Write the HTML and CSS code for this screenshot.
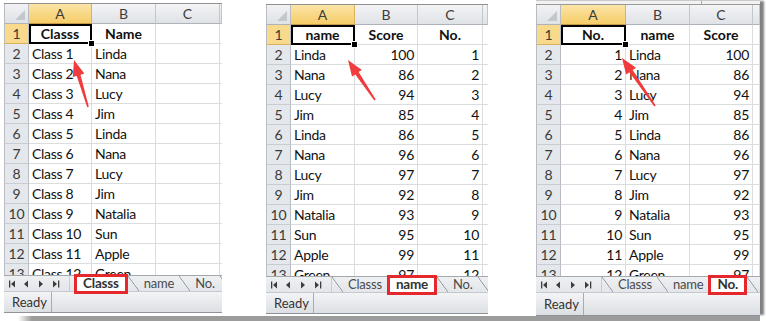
FILE: index.html
```html
<!DOCTYPE html>
<html>
<head>
<meta charset="utf-8">
<title>Sheets</title>
<link rel="stylesheet" href="styles.css">
</head>
<body>
<div class="page">
  <div class="row">
    <section class="panel p1">
      <div class="topline"></div>
      <div class="sheet">
        <div class="corner"><i></i></div><div class="ch sel">A</div><div class="ch">B</div><div class="ch">C</div><div class="ch"></div>
        <div class="rh sel">1</div><div class="c b act">Classs</div><div class="c b">Name</div><div class="c"></div><div class="c"></div>
        <div class="rh">2</div><div class="c">Class 1</div><div class="c">Linda</div><div class="c"></div><div class="c"></div>
        <div class="rh">3</div><div class="c">Class 2</div><div class="c">Nana</div><div class="c"></div><div class="c"></div>
        <div class="rh">4</div><div class="c">Class 3</div><div class="c">Lucy</div><div class="c"></div><div class="c"></div>
        <div class="rh">5</div><div class="c">Class 4</div><div class="c">Jim</div><div class="c"></div><div class="c"></div>
        <div class="rh">6</div><div class="c">Class 5</div><div class="c">Linda</div><div class="c"></div><div class="c"></div>
        <div class="rh">7</div><div class="c">Class 6</div><div class="c">Nana</div><div class="c"></div><div class="c"></div>
        <div class="rh">8</div><div class="c">Class 7</div><div class="c">Lucy</div><div class="c"></div><div class="c"></div>
        <div class="rh">9</div><div class="c">Class 8</div><div class="c">Jim</div><div class="c"></div><div class="c"></div>
        <div class="rh">10</div><div class="c">Class 9</div><div class="c">Natalia</div><div class="c"></div><div class="c"></div>
        <div class="rh">11</div><div class="c">Class 10</div><div class="c">Sun</div><div class="c"></div><div class="c"></div>
        <div class="rh">12</div><div class="c">Class 11</div><div class="c">Apple</div><div class="c"></div><div class="c"></div>
        <div class="rh">13</div><div class="c">Class 12</div><div class="c">Green</div><div class="c"></div><div class="c"></div>
      </div>
      <div class="tabbar">
        <div class="nav"><svg width="60" height="8" viewBox="0 0 60 8"><path d="M5 .5h1.3v7H5zM11 .5v7L7 4zM24 .5v7L20 4zM35 .5v7L39 4zM49 .5v7L53 4zM54 .5h1.3v7H54z" fill="#3d3d3d"/></svg></div>
        <div class="tab on first">Classs</div>
        <div class="tab"><span class="sl"></span><span class="tx">name</span></div>
        <div class="tab"><span class="sl"></span><span class="tx">No.</span></div>
        <div class="tab"><span class="sl"></span></div>
      </div>
      <div class="status"><span class="ready">Ready</span></div>
    </section>

    <section class="panel p2">
      <div class="topline"></div>
      <div class="sheet">
        <div class="corner"><i></i></div><div class="ch sel">A</div><div class="ch">B</div><div class="ch">C</div><div class="ch"></div>
        <div class="rh sel">1</div><div class="c b act">name</div><div class="c b">Score</div><div class="c b">No.</div><div class="c"></div>
        <div class="rh">2</div><div class="c">Linda</div><div class="c n">100</div><div class="c n">1</div><div class="c"></div>
        <div class="rh">3</div><div class="c">Nana</div><div class="c n">86</div><div class="c n">2</div><div class="c"></div>
        <div class="rh">4</div><div class="c">Lucy</div><div class="c n">94</div><div class="c n">3</div><div class="c"></div>
        <div class="rh">5</div><div class="c">Jim</div><div class="c n">85</div><div class="c n">4</div><div class="c"></div>
        <div class="rh">6</div><div class="c">Linda</div><div class="c n">86</div><div class="c n">5</div><div class="c"></div>
        <div class="rh">7</div><div class="c">Nana</div><div class="c n">96</div><div class="c n">6</div><div class="c"></div>
        <div class="rh">8</div><div class="c">Lucy</div><div class="c n">97</div><div class="c n">7</div><div class="c"></div>
        <div class="rh">9</div><div class="c">Jim</div><div class="c n">92</div><div class="c n">8</div><div class="c"></div>
        <div class="rh">10</div><div class="c">Natalia</div><div class="c n">93</div><div class="c n">9</div><div class="c"></div>
        <div class="rh">11</div><div class="c">Sun</div><div class="c n">95</div><div class="c n">10</div><div class="c"></div>
        <div class="rh">12</div><div class="c">Apple</div><div class="c n">99</div><div class="c n">11</div><div class="c"></div>
        <div class="rh">13</div><div class="c">Green</div><div class="c n">97</div><div class="c n">12</div><div class="c"></div>
      </div>
      <div class="tabbar">
        <div class="nav"><svg width="60" height="8" viewBox="0 0 60 8"><path d="M5 .5h1.3v7H5zM11 .5v7L7 4zM24 .5v7L20 4zM35 .5v7L39 4zM49 .5v7L53 4zM54 .5h1.3v7H54z" fill="#3d3d3d"/></svg></div>
        <div class="tab"><span class="sl"></span><span class="tx">Classs</span></div>
        <div class="tab on">name</div>
        <div class="tab"><span class="sl"></span><span class="tx">No.</span></div>
        <div class="tab"><span class="sl"></span><span class="tx">S</span></div>
      </div>
      <div class="status"><span class="ready">Ready</span></div>
    </section>

    <section class="panel p3">
      <div class="topstrip"><span class="seg"></span></div>
      <div class="sheet">
        <div class="corner"><i></i></div><div class="ch sel">A</div><div class="ch">B</div><div class="ch">C</div><div class="ch"></div>
        <div class="rh sel">1</div><div class="c b act">No.</div><div class="c b">name</div><div class="c b">Score</div><div class="c"></div>
        <div class="rh">2</div><div class="c n">1</div><div class="c">Linda</div><div class="c n">100</div><div class="c"></div>
        <div class="rh">3</div><div class="c n">2</div><div class="c">Nana</div><div class="c n">86</div><div class="c"></div>
        <div class="rh">4</div><div class="c n">3</div><div class="c">Lucy</div><div class="c n">94</div><div class="c"></div>
        <div class="rh">5</div><div class="c n">4</div><div class="c">Jim</div><div class="c n">85</div><div class="c"></div>
        <div class="rh">6</div><div class="c n">5</div><div class="c">Linda</div><div class="c n">86</div><div class="c"></div>
        <div class="rh">7</div><div class="c n">6</div><div class="c">Nana</div><div class="c n">96</div><div class="c"></div>
        <div class="rh">8</div><div class="c n">7</div><div class="c">Lucy</div><div class="c n">97</div><div class="c"></div>
        <div class="rh">9</div><div class="c n">8</div><div class="c">Jim</div><div class="c n">92</div><div class="c"></div>
        <div class="rh">10</div><div class="c n">9</div><div class="c">Natalia</div><div class="c n">93</div><div class="c"></div>
        <div class="rh">11</div><div class="c n">10</div><div class="c">Sun</div><div class="c n">95</div><div class="c"></div>
        <div class="rh">12</div><div class="c n">11</div><div class="c">Apple</div><div class="c n">99</div><div class="c"></div>
        <div class="rh">13</div><div class="c n">12</div><div class="c">Green</div><div class="c n">97</div><div class="c"></div>
      </div>
      <div class="tabbar">
        <div class="nav"><svg width="60" height="8" viewBox="0 0 60 8"><path d="M5 .5h1.3v7H5zM11 .5v7L7 4zM24 .5v7L20 4zM35 .5v7L39 4zM49 .5v7L53 4zM54 .5h1.3v7H54z" fill="#3d3d3d"/></svg></div>
        <div class="tab"><span class="sl"></span><span class="tx">Classs</span></div>
        <div class="tab"><span class="sl"></span><span class="tx">name</span></div>
        <div class="tab on">No.</div>
        <div class="tab"><span class="sl"></span></div>
      </div>
      <div class="status"><span class="ready">Ready</span></div>
    </section>
  </div>
  <div class="band"></div>

  <svg class="arrows" width="766" height="321" viewBox="0 0 766 321">
    <polygon points="74,60 84.3,73.6 80.5,74.8 88.8,106.8 87.2,107.2 76.7,75.9 72.8,77" fill="#f03c3c"/>
    <polygon points="348,60 361.9,69.9 358.6,72.1 375.7,99.6 374.3,100.5 355.3,74.4 352,76.6" fill="#f03c3c"/>
    <polygon points="622,58 636,67.8 632.7,70.1 655.7,105.6 654.3,106.5 629.4,72.3 626.1,74.6" fill="#f03c3c"/>
  </svg>
</div>
</body>
</html>
```

FILE: styles.css
```css
html, body {
  margin: 0;
  padding: 0;
  background: #fff;
}
body {
  font-family: Lato, "Liberation Sans", sans-serif;
  color: #111;
}
.page {
  position: relative;
  width: 766px;
  height: 321px;
  overflow: hidden;
  display: flex;
  flex-direction: column;
}
.row {
  display: flex;
  align-items: flex-start;
}
.panel {
  display: flex;
  flex-direction: column;
  box-sizing: border-box;
}
.p1 { margin-left: 4px; margin-top: 3px; width: 218px; }
.p2 { margin-left: 44px; margin-top: 4px; width: 222px; }
.p3 { margin-left: 48px; margin-top: 0; width: 224px; box-shadow: 5px 0 2px -1px rgba(0,0,0,.5); }

.topline { height: 1px; background: #8f8f8f; }
.topstrip {
  height: 5px;
  box-sizing: border-box;
  background: #f2f2f2;
  border-top: 1px solid #c9c9c9;
  border-bottom: 1px solid #9a9a9a;
  display: flex;
  justify-content: flex-end;
}
.topstrip .seg { width: 58px; border-left: 1px solid #a9a9a9; }

.sheet {
  display: grid;
  grid-auto-rows: 20px;
  height: 271px;
  overflow: hidden;
  font-size: 14px;
}
.p1 .sheet { grid-template-columns: 25px 63px 64px 64px 2px; }
.p2 .sheet { grid-template-columns: 25px 64px 63px 65px 5px; }
.p3 .sheet { grid-template-columns: 25px 65px 64px 63px 7px; }

.sheet > div { box-sizing: border-box; }

.corner {
  background: linear-gradient(#f1f2f4, #dfe2e6);
  border-right: 1px solid #b9bdc3;
  border-bottom: 1px solid #aeb3b9;
  border-left: 1px solid #b9bdc3;
  display: flex;
  justify-content: flex-end;
  align-items: flex-end;
  padding: 0 3px 3px 0;
}
.corner i {
  width: 0;
  height: 0;
  border-left: 10px solid transparent;
  border-bottom: 10px solid #c4c8cd;
}
.ch {
  background: linear-gradient(#f3f4f6, #dfe2e6);
  border-right: 1px solid #c3c7cc;
  border-bottom: 1px solid #aeb3b9;
  text-align: center;
  color: #3c3c3c;
  line-height: 19px;
}
.ch.sel {
  background: linear-gradient(#fbe4a6, #f6cd68);
  border-right-color: #d9b25e;
  border-bottom-color: #c29a47;
}
.rh {
  background: #e4e7eb;
  border-left: 1px solid #b9bdc3;
  border-right: 1px solid #b9bdc3;
  border-bottom: 1px solid #c9cdd2;
  text-align: center;
  color: #3a3a3a;
  line-height: 20px;
}
.rh.sel { background: #f9d98b; border-bottom-color: #d9b25e; }

.c {
  border-right: 1px solid #dadcdd;
  border-bottom: 1px solid #dadcdd;
  padding: 0 3px;
  line-height: 20px;
  letter-spacing: -0.3px;
  white-space: nowrap;
  overflow: hidden;
}
.c.n { text-align: right; }
.c.b { font-weight: bold; text-align: center; letter-spacing: 0; }
.c.act {
  position: relative;
  overflow: visible;
  outline: 2px solid #000;
  outline-offset: -2px;
  z-index: 1;
}
.c.act::after {
  content: "";
  position: absolute;
  right: -4px;
  bottom: -4px;
  width: 5px;
  height: 5px;
  background: #000;
  border: 1px solid #fff;
}

.tabbar {
  height: 16px;
  box-sizing: border-box;
  display: flex;
  align-items: stretch;
  background: linear-gradient(#eef0f2, #e3e6ea);
  border-top: 1px solid #a3a8ae;
  font-size: 13px;
  letter-spacing: -0.2px;
  color: #4a4a4a;
  white-space: nowrap;
  overflow-x: clip;
  overflow-y: visible;
  position: relative;
  z-index: 2;
}
.nav {
  width: 66px;
  flex: none;
  display: flex;
  align-items: center;
  border-right: 1px solid #c9cdd2;
  box-sizing: border-box;
}
.nav svg { display: block; }
.tab {
  display: flex;
  align-items: center;
  flex: none;
  line-height: 15px;
}
.tab .sl {
  width: 11px;
  align-self: stretch;
  background: linear-gradient(to top right, transparent calc(50% - 0.7px), #8b9199 50%, transparent calc(50% + 0.7px));
}
.tab .tx { padding: 0 5px; }
.tab.on {
  position: relative;
  background: #fff;
  font-weight: bold;
  font-size: 13.5px;
  letter-spacing: -0.2px;
  color: #333;
  padding: 0 6px;
  margin: 0 3px;
}
.tab.on.first { margin-left: 7px; }
.tab.on::after {
  content: "";
  position: absolute;
  left: -3px;
  right: -3px;
  top: -2px;
  bottom: -3px;
  border: 3px solid #e5282d;
}

.status {
  height: 22px;
  box-sizing: border-box;
  background: linear-gradient(#f3f4f6, #dcdfe3);
  border-top: 1px solid #c5c9ce;
  border-bottom: 1px solid #8e9399;
  display: flex;
  align-items: center;
  font-size: 13px;
  color: #333;
}
.p3 .status { height: 24px; }
.ready {
  padding: 0 10px 0 8px;
  width: 48px;
  box-sizing: border-box;
  border-right: 1px solid #a8acb2;
  align-self: stretch;
  display: flex;
  align-items: center;
}
.band {
  margin-left: 18px;
  width: 742px;
  height: 5px;
  background: linear-gradient(to right, rgba(150,150,150,0), #9c9c9c 14px, #9c9c9c);
}
.arrows {
  position: absolute;
  left: 0;
  top: 0;
  pointer-events: none;
}
```
